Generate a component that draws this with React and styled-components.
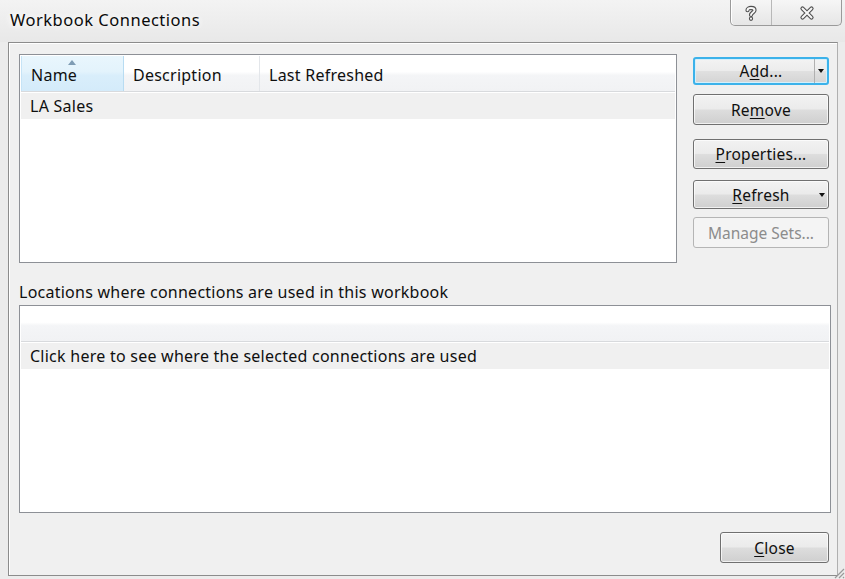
import React from 'react';
import styled, { createGlobalStyle, css } from 'styled-components';

const GlobalStyle = createGlobalStyle`
  html, body { margin: 0; padding: 0; background: #ececec; }
  body { font-family: "Noto Sans", "Open Sans", sans-serif; color: #0f0f0f; letter-spacing: 0.25px; }
  * { box-sizing: border-box; }
`;

const Window = styled.div`
  width: 845px; height: 579px; display: flex; flex-direction: column;
  background: #ececec; overflow: hidden; position: relative;
`;
const TitleBar = styled.div`
  height: 42px; flex: none; display: flex; align-items: flex-start;
  background: linear-gradient(180deg, #f3f3f3 0%, #e8e8e8 100%);
`;
const Title = styled.div`
  padding: 8px 0 0 10px; font-size: 16.5px; letter-spacing: 0.5px; color: #0a0a0a;
  text-shadow: 0 0 6px #fff, 0 0 10px #fff;
`;
const Caption = styled.div`
  margin-left: auto; margin-right: 3px; display: flex; height: 26px;
  border: 1px solid #9a9a9a; border-top: none; border-radius: 0 0 5px 5px;
  background: linear-gradient(180deg, #f6f6f6, #e6e6e6);
  box-shadow: inset 1px 0 #fff;
`;
const CapButton = styled.div`
  width: ${p => p.w}px; display: flex; align-items: center; justify-content: center;
  & + & { border-left: 1px solid #b8b8b8; }
`;
const Frame = styled.div`
  flex: 1; margin: 0 7px 3px 8px; background: #f0f0f0;
  border: 1px solid #8c8c8c; border-right-color: #b0b0b0;
  box-shadow: inset 1px 1px #fff;
  padding: 11px 7px 0 10px; display: flex; flex-direction: column;
`;
const TopRow = styled.div`
  display: flex; align-items: flex-start;
`;
const ListBox = styled.div`
  width: ${p => p.w}px; height: ${p => p.h}px; flex: none;
  background: #fff; border: 1px solid #8d9096; padding: 1px;
  box-shadow: inset 1px 1px #fff;
`;
const Header = styled.div`
  height: ${p => p.h}px; display: flex;
  background: linear-gradient(180deg, #ffffff 0%, #ffffff 45%, #f4f5f7 55%, #f1f2f4 100%);
  border-bottom: 1px solid #d8dadd;
`;
const HeaderCell = styled.div`
  width: ${p => p.w}px; flex: ${p => (p.w ? 'none' : '1')};
  position: relative; display: flex; align-items: center;
  padding: 2px 0 0 9px; font-size: 16px;
  border-right: 1px solid ${p => (p.active ? '#b8dcf2' : '#e3e6ea')};
  ${p => p.active && css`
    background: linear-gradient(180deg, #e9f6fd 0%, #e3f3fc 45%, #d9eefb 55%, #d4ebfa 100%);
    border-left: 1px solid #c6e4f7;
  `}
  ${p => p.last && css`border-right: none;`}
`;
const SortArrow = styled.span`
  position: absolute; top: 4px; left: 46px;
  border-left: 4.5px solid transparent; border-right: 4.5px solid transparent;
  border-bottom: 5px solid #7f9cb4;
`;
const Row = styled.div`
  height: 26px; margin-top: 1px; display: flex; align-items: center;
  padding-left: 9px; background: #f0f0f0; font-size: 16px;
`;
const ButtonCol = styled.div`
  margin-left: 16px; padding-top: 3px; width: 136px;
  display: flex; flex-direction: column;
`;
const Button = styled.div`
  position: relative; height: ${p => p.h || 30}px; width: ${p => p.w || 136}px;
  margin-top: ${p => p.mt || 0}px; display: flex; align-items: center; justify-content: center;
  font-size: 15.5px; border: 1px solid #707070; border-radius: 3px;
  background: linear-gradient(180deg, #f2f2f2 0%, #ebebeb 48%, #dddddd 52%, #cfcfcf 100%);
  box-shadow: inset 0 0 0 1px rgba(255, 255, 255, 0.7);
  u { text-decoration: underline; text-underline-offset: 2px; }
  ${p => p.focused && css`
    border: 2px solid #3cb2ea;
    box-shadow: inset 0 0 0 1px #d4f0fc;
    background: linear-gradient(180deg, #f3f3f3 0%, #ececec 48%, #e0e0e0 52%, #d4d4d4 100%);
  `}
  ${p => p.disabled && css`
    border-color: #b5b5b5; color: #8c8c8c;
    background: #f4f4f4; box-shadow: none; letter-spacing: 0;
  `}
`;
const Split = styled.div`
  position: absolute; right: 0; top: 0; bottom: 0; width: 13px;
  display: flex; align-items: center; justify-content: center;
  ${p => p.line && css`border-left: 1px solid #b0b0b0;`}
`;
const Caret = styled.span`
  border-left: 3.5px solid transparent; border-right: 3.5px solid transparent;
  border-top: 4px solid #111;
`;
const Label = styled.div`
  margin-top: 19px; height: 20px; font-size: 16px; line-height: 20px;
`;
const LowerList = styled(ListBox)`
  margin-top: 3px;
`;
const Footer = styled.div`
  display: flex; justify-content: flex-end; padding-right: 1px; margin-top: 19px;
`;
const Grip = styled.svg`
  position: absolute; right: 0; bottom: 0;
`;

function OutlineGlyph({ d }) {
  return (
    <svg width="18" height="18" viewBox="0 0 18 18">
      <path d={d} fill="none" stroke="#4f4f4f" strokeWidth="4.2" strokeLinecap="round" strokeLinejoin="round" />
      <path d={d} fill="none" stroke="#f7f7f7" strokeWidth="2" strokeLinecap="round" strokeLinejoin="round" />
    </svg>
  );
}

export default function App() {
  return (
    <Window>
      <GlobalStyle />
      <TitleBar>
        <Title>Workbook Connections</Title>
        <Caption>
          <CapButton w={40}>
            <OutlineGlyph d="M5.5 6.2 C5.5 3.2 12.5 3.2 12.5 6.2 C12.5 8.4 9 8.6 9 11 M9 14.6 L9 14.8" />
          </CapButton>
          <CapButton w={70}>
            <OutlineGlyph d="M4.5 4.5 L13.5 13.5 M13.5 4.5 L4.5 13.5" />
          </CapButton>
        </Caption>
      </TitleBar>

      <Frame>
        <TopRow>
          <ListBox w={658} h={209}>
            <Header h={36}>
              <HeaderCell w={103} active>
                <SortArrow />
                Name
              </HeaderCell>
              <HeaderCell w={136}>Description</HeaderCell>
              <HeaderCell last>Last Refreshed</HeaderCell>
            </Header>
            <Row>LA Sales</Row>
          </ListBox>

          <ButtonCol>
            <Button focused h={28}>
              <span>A<u>d</u>d...</span>
              <Split line><Caret /></Split>
            </Button>
            <Button mt={9} h={31}><span>Re<u>m</u>ove</span></Button>
            <Button mt={14}><span><u>P</u>roperties...</span></Button>
            <Button mt={11} h={29}>
              <span><u>R</u>efresh</span>
              <Split><Caret /></Split>
            </Button>
            <Button mt={8} h={31} disabled>Manage Sets...</Button>
          </ButtonCol>
        </TopRow>

        <Label>Locations where connections are used in this workbook</Label>

        <LowerList w={812} h={208}>
          <Header h={35} />
          <Row>Click here to see where the selected connections are used</Row>
        </LowerList>

        <Footer>
          <Button w={109} h={31}><span><u>C</u>lose</span></Button>
        </Footer>
      </Frame>

      <Grip width="14" height="14" viewBox="0 0 14 14">
        <path d="M13 4 L4 13 M13 8 L8 13 M13 12 L12 13" stroke="#9a9a9a" strokeWidth="1.2" />
      </Grip>
    </Window>
  );
}
